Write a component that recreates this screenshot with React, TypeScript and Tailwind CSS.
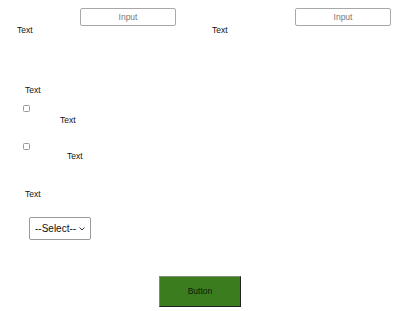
import React from "react";

const font = { fontFamily: '"Liberation Sans", Arial, sans-serif' };

function Label({ className = "" }: { className?: string }) {
  return <div className={`h-[9px] text-[8.5px] leading-none text-[#111] ${className}`}>Text</div>;
}

function Box({ className = "" }: { className?: string }) {
  return <div className={`w-[7px] h-[7px] border border-[#9a9a9a] rounded-[1.5px] bg-white ${className}`} />;
}

export default function App() {
  return (
    <div className="w-[400px] h-[311px] bg-white overflow-hidden flex flex-col" style={font}>
      <div className="flex items-start pt-[8px] pl-[17px]">
        <Label className="mt-[18px] w-[63px]" />
        <div className="w-[96px] h-[18px] border border-[#a8a8a8] rounded-[2px] flex items-center justify-center text-[8.5px] text-[#777]">
          Input
        </div>
        <div className="w-[36px]" />
        <Label className="mt-[18px] w-[83px]" />
        <div className="w-[96px] h-[18px] border border-[#a8a8a8] rounded-[2px] flex items-center justify-center text-[8.5px] text-[#777]">
          Input
        </div>
      </div>
      <Label className="ml-[25px] mt-[51px]" />
      <Box className="ml-[23px] mt-[10px]" />
      <Label className="ml-[60px] mt-[4px]" />
      <Box className="ml-[23px] mt-[18px]" />
      <Label className="ml-[67px] mt-[2px]" />
      <Label className="ml-[25px] mt-[29px]" />
      <div className="ml-[29px] mt-[18px] w-[62px] h-[23px] border border-[#9a9a9a] rounded-[2px] flex items-center pl-[5px] pr-[5px] text-[10px] text-[#111]">
        <span className="flex-1">--Select--</span>
        <svg width="6" height="4" viewBox="0 0 6 4">
          <path d="M0.5 0.5 L3 3 L5.5 0.5" fill="none" stroke="#333" strokeWidth="1" />
        </svg>
      </div>
      <div className="flex justify-center mt-[36px]">
        <div className="w-[82px] h-[31px] bg-[#3b7d1e] border border-t-[#7f8c7a] border-l-[#7f8c7a] border-r-[#222] border-b-[#222] flex items-center justify-center text-[8.5px] text-[#0c1a05]">
          Button
        </div>
      </div>
    </div>
  );
}
